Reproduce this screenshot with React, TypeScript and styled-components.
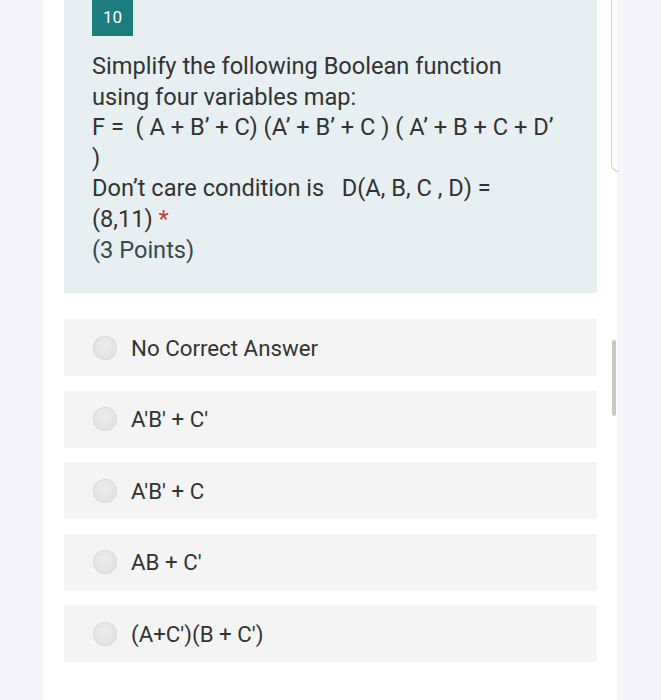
import React from "react";
import styled, { createGlobalStyle } from "styled-components";

const Global = createGlobalStyle`
  html, body { margin: 0; padding: 0; }
  body { background: #f3f3f9; font-family: Roboto, "Liberation Sans", Arial, sans-serif; }
`;

const Page = styled.div`
  min-height: 700px;
  background: #f3f3f9;
  overflow: hidden;
`;

const Card = styled.div`
  position: relative;
  margin-left: 43px;
  width: 574px;
  min-height: 700px;
  background: #ffffff;
  box-sizing: border-box;
  padding: 0 20px 0 21px;
`;

const QuestionBox = styled.section`
  background: #e8eff2;
  height: 293px;
  box-sizing: border-box;
  padding: 0 28px;
`;

const Badge = styled.div`
  width: 41px;
  height: 36px;
  background: #1b7d7e;
  color: #ffffff;
  font-size: 17px;
  display: flex;
  align-items: center;
  justify-content: center;
  padding-bottom: 2px;
  box-sizing: border-box;
`;

const QuestionText = styled.div`
  margin-top: 15px;
  font-size: 23.6px;
  line-height: 30.6px;
  color: #333333;
  white-space: pre;
`;

const Line = styled.div``;

const Required = styled.span`
  color: #c53b3b;
`;

const Points = styled.div`
  color: #36494c;
`;

const Options = styled.div`
  margin-top: 26px;
  display: flex;
  flex-direction: column;
  gap: 14.5px;
`;

const Option = styled.label`
  height: 57px;
  background: #f4f4f4;
  display: flex;
  align-items: center;
  padding-left: 29px;
  gap: 14px;
  font-size: 22.3px;
  color: #333333;
`;

const Radio = styled.span`
  width: 24px;
  height: 24px;
  border-radius: 50%;
  background: radial-gradient(circle at 50% 40%, #ececec 0%, #e2e2e2 70%, #d9d9d9 100%);
  box-shadow: inset 0 0 0 1px #dcdcdc;
  flex: none;
`;

const EdgeLine = styled.div`
  position: absolute;
  left: 568px;
  top: 0;
  width: 8px;
  height: 172px;
  border-left: 1.5px solid #cfcfcf;
  border-bottom: 1.5px solid #cfcfcf;
  border-bottom-left-radius: 8px;
  box-sizing: border-box;
`;

const ScrollThumb = styled.div`
  position: absolute;
  left: 569px;
  top: 340px;
  width: 4px;
  height: 76px;
  border-radius: 2px;
  background: #c8c8c8;
`;

const options = [
  "No Correct Answer",
  "A'B' + C'",
  "A'B' + C",
  "AB + C'",
  "(A+C')(B + C')",
];

export default function App() {
  return (
    <Page>
      <Global />
      <Card>
        <QuestionBox>
          <Badge>10</Badge>
          <QuestionText>
            <Line>Simplify the following Boolean function</Line>
            <Line>using four variables map:</Line>
            <Line>{"F =  ( A + B’ + C) (A’ + B’ + C ) ( A’ + B + C + D’"}</Line>
            <Line>)</Line>
            <Line>{"Don’t care condition is   D(A, B, C , D) ="}</Line>
            <Line>
              (8,11) <Required>*</Required>
            </Line>
            <Points>(3 Points)</Points>
          </QuestionText>
        </QuestionBox>
        <Options>
          {options.map((o) => (
            <Option key={o}>
              <Radio />
              <span>{o}</span>
            </Option>
          ))}
        </Options>
        <EdgeLine />
        <ScrollThumb />
      </Card>
    </Page>
  );
}
